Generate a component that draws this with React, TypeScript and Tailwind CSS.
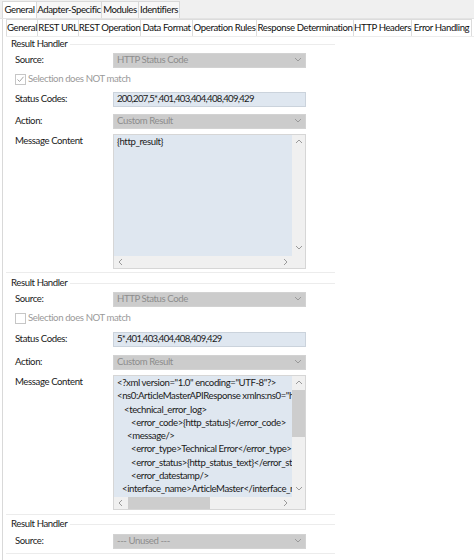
import React from "react";

const font = { fontFamily: 'Lato, "Noto Sans", sans-serif' };

function Chevron({ dir }: { dir: "up" | "down" | "left" | "right" }) {
  const d = {
    up: "M1 5 L4 2 L7 5",
    down: "M1 2 L4 5 L7 2",
    left: "M5 1 L2 4 L5 7",
    right: "M2 1 L5 4 L2 7",
  }[dir];
  return (
    <svg width="8" height="8" viewBox="0 0 8 8" className="shrink-0">
      <path d={d} fill="none" stroke="#9a9a9a" strokeWidth="1" />
    </svg>
  );
}

function Select({ value }: { value: string }) {
  return (
    <div className="flex h-[15px] w-[193px] items-center justify-between border border-[#d2d2d2] bg-[#cccccc] pl-[3px] pr-[3px] text-[#8c8c8c]">
      <span className="leading-none">{value}</span>
      <Chevron dir="down" />
    </div>
  );
}

function Input({ value }: { value: string }) {
  return (
    <div className="flex h-[15px] w-[193px] items-center border border-[#cbd3dc] bg-[#dfe7f0] pl-[3px] text-[#1a1a1a]">
      <span className="leading-none tracking-[-0.7px]">{value}</span>
    </div>
  );
}

function Row({ label, h, children }: { label: string; h: string; children: React.ReactNode }) {
  return (
    <div className={`flex ${h} items-center`}>
      <div className="w-[107px] pl-[9px] text-[#1a1a1a]">{label}</div>
      {children}
    </div>
  );
}

function Check({ checked, label }: { checked: boolean; label: string }) {
  return (
    <div className="flex h-[20px] items-center pl-[9px] text-[#9a9a9a]">
      <div className="mr-[2px] flex h-[11px] w-[11px] items-center justify-center border border-[#c6c6c6] bg-white">
        {checked && (
          <svg width="9" height="9" viewBox="0 0 9 9">
            <path d="M1.5 4.5 L3.5 6.5 L7.5 1.8" fill="none" stroke="#a5a5a5" strokeWidth="1" />
          </svg>
        )}
      </div>
      {label}
    </div>
  );
}

function TextArea({
  lines,
  thumbs,
}: {
  lines: { t: string; pl: string }[];
  thumbs?: boolean;
}) {
  return (
    <div className="flex h-[135px] w-[193px] flex-col border border-[#d6d6d6] bg-[#f0f0f0]">
      <div className="flex min-h-0 flex-1">
        <div className="flex-1 overflow-hidden bg-[#dfe7f0] leading-[13.3px] whitespace-pre text-[#1a1a1a]">
          {lines.map((l, i) => (
            <div key={i} className={l.pl}>
              {l.t}
            </div>
          ))}
        </div>
        <div className="flex w-[13px] flex-col items-center bg-[#f0f0f0] pt-[3px] pb-[4px]">
          <Chevron dir="up" />
          {thumbs && <div className="mt-[3px] h-[47px] w-[13px] bg-[#cdcdcd]" />}
          <div className="flex-1" />
          <Chevron dir="down" />
        </div>
      </div>
      <div className="flex h-[12px] items-center bg-[#f0f0f0]">
        <div className="flex h-full w-[179px] items-center px-[3px]">
          <Chevron dir="left" />
          {thumbs ? <div className="ml-[3px] h-full w-[82px] bg-[#cdcdcd]" /> : null}
          <div className="flex-1" />
          <Chevron dir="right" />
        </div>
      </div>
    </div>
  );
}

function Header() {
  return (
    <div className="flex h-[14px] items-center">
      <span className="pl-[5px] pr-[3px] text-[#1a1a1a]">Result Handler</span>
      <div className="h-px flex-1 bg-[#ececec]" />
    </div>
  );
}

function MessageRow({ lines, thumbs }: { lines: { t: string; pl: string }[]; thumbs?: boolean }) {
  return (
    <div className="mt-[1px] flex items-start">
      <div className="w-[107px] pl-[9px] text-[#1a1a1a]">Message Content</div>
      <TextArea lines={lines} thumbs={thumbs} />
    </div>
  );
}

const xml = [
  { t: '<?xml version="1.0" encoding="UTF-8"?>', pl: "pl-[3px]" },
  { t: '<ns0:ArticleMasterAPIResponse xmlns:ns0="http://', pl: "pl-[3px]" },
  { t: "<technical_error_log>", pl: "pl-[10px]" },
  { t: "<error_code>{http_status}</error_code>", pl: "pl-[17px]" },
  { t: "<message/>", pl: "pl-[13px]" },
  { t: "<error_type>Technical Error</error_type>", pl: "pl-[17px]" },
  { t: "<error_status>{http_status_text}</error_status>", pl: "pl-[17px]" },
  { t: "<error_datestamp/>", pl: "pl-[17px]" },
  { t: "<interface_name>ArticleMaster</interface_name>", pl: "pl-[8px]" },
  { t: "<interface_namespace/>", pl: "pl-[17px]" },
  { t: "<trackId/>", pl: "pl-[17px]" },
];

const outerTabs = [
  { t: "General", w: "w-[35px]" },
  { t: "Adapter-Specific", w: "w-[65px]" },
  { t: "Modules", w: "w-[37px]" },
  { t: "Identifiers", w: "w-[41px]" },
];

const innerTabs = [
  { t: "General", w: "w-[32px]" },
  { t: "REST URL", w: "w-[41px]" },
  { t: "REST Operation", w: "w-[62px]" },
  { t: "Data Format", w: "w-[52px]" },
  { t: "Operation Rules", w: "w-[64px]" },
  { t: "Response Determination", w: "w-[97px]" },
  { t: "HTTP Headers", w: "w-[58px]" },
  { t: "Error Handling", w: "w-[60px]" },
];

export default function App() {
  return (
    <div style={font} className="h-[560px] w-[474px] overflow-hidden bg-white text-[9.6px] tracking-[-0.4px]">
      <div className="flex h-[19px] items-end border-b border-[#e3e3e3] bg-[#f0f0f0] pl-[2px]">
        {outerTabs.map((t, i) => (
          <div
            key={t.t}
            className={`flex h-[17px] ${t.w} items-center justify-center whitespace-nowrap border-r border-t border-[#d9d9d9] text-[#111] ${
              i === 0 ? "border-l bg-white" : "bg-[#f7f7f7]"
            }`}
          >
            {t.t}
          </div>
        ))}
      </div>
      <div className="ml-[2px] flex h-full flex-col border-l border-[#d9d9d9] pl-[3px]">
        <div className="flex h-[18px] items-end border-b border-[#ececec]">
          {innerTabs.map((t, i) => (
            <div
              key={t.t}
              className={`flex h-[17px] ${t.w} items-center justify-center whitespace-nowrap border-r border-t border-[#dcdcdc] text-[#111] ${
                i === 0 ? "border-l" : ""
              }`}
            >
              {t.t}
            </div>
          ))}
        </div>
        <div className="w-[329px]">
          <Header />
          <Row label="Source:" h="h-[18px]">
            <Select value="HTTP Status Code" />
          </Row>
          <Check checked label="Selection does NOT match" />
          <Row label="Status Codes:" h="h-[20px]">
            <Input value="200,207,5*,401,403,404,408,409,429" />
          </Row>
          <Row label="Action:" h="h-[24px]">
            <Select value="Custom Result" />
          </Row>
          <MessageRow lines={[{ t: "{http_result}", pl: "pl-[3px]" }]} />
          <div className="mt-[3px] h-px bg-[#ececec]" />

          <div className="mt-[3px]" />
          <Header />
          <Row label="Source:" h="h-[18px]">
            <Select value="HTTP Status Code" />
          </Row>
          <Check checked={false} label="Selection does NOT match" />
          <Row label="Status Codes:" h="h-[22px]">
            <Input value="5*,401,403,404,408,409,429" />
          </Row>
          <Row label="Action:" h="h-[24px]">
            <Select value="Custom Result" />
          </Row>
          <MessageRow lines={xml} thumbs />
          <div className="mt-[4px] h-px bg-[#ececec]" />

          <div className="mt-[2px]" />
          <Header />
          <Row label="Source:" h="h-[20px]">
            <Select value="--- Unused ---" />
          </Row>
          <div className="mt-[2px] h-px bg-[#ececec]" />
        </div>
      </div>
    </div>
  );
}
